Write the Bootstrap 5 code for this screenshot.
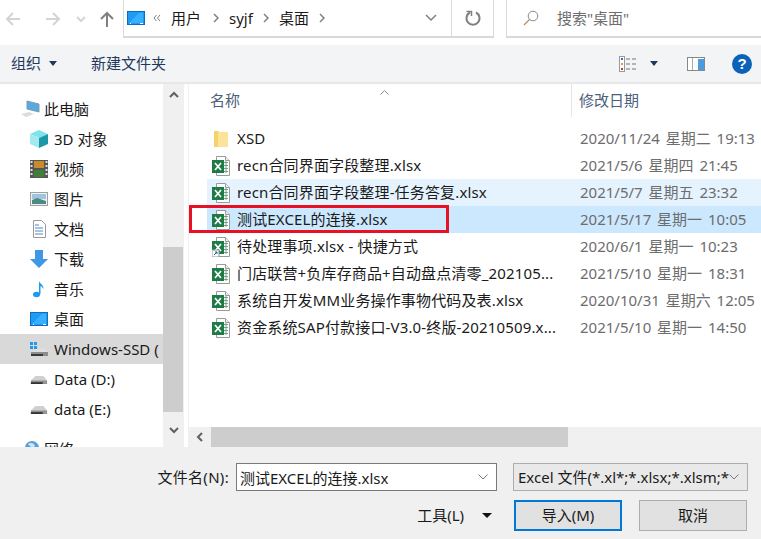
<!DOCTYPE html>
<html lang="zh-CN">
<head>
  <meta charset="UTF-8">
  <title>打开</title>
  <link href="https://cdn.jsdelivr.net/npm/bootstrap@5.3.3/dist/css/bootstrap.min.css" rel="stylesheet">
  <style>
    html, body { height: 539px; overflow: hidden; }
    body { font-family: "Noto Sans", "Noto Sans CJK SC", sans-serif; font-size: 15px; color: #1a1a1a; background: #fff; }
    .dlg { width: 761px; height: 539px; overflow: hidden; }
    svg { display: block; flex: none; }

    /* address row */
    .topbar { height: 45px; flex: none; }
    .nav-btns { width: 123px; padding: 11px 0 0 5px; height: 37px; }
    .addr { width: 371px; height: 38px; border: 2px solid #d9d9d9; border-width: 0 1px 2px 1px; }
    .addr-main { padding-left: 3px; height: 36px; }
    .crumb { font-size: 15px; white-space: nowrap; }
    .addr-drop { width: 24px; margin-left: auto; margin-right: 8px; }
    .addr-refresh { width: 42px; height: 36px; border-left: 1px solid #d9d9d9; }
    .search { margin-left: 12px; width: 255px; height: 38px; border-bottom: 2px solid #d9d9d9; border-left: 1px solid #d9d9d9; padding-left: 16px; color: #6d6d6d; }

    /* command row */
    .cmdbar { height: 39px; flex: none; background: #f3f4f6; border-bottom: 2px solid #e7e8ea; color: #1e395b; padding: 0 9px 0 11px; }
    .tri { width: 0; height: 0; border: 4px solid transparent; border-top: 5px solid #1e395b; border-bottom: 0; }
    .help { width: 20px; height: 20px; border-radius: 50%; background: #0b63b8; color: #fff; font: bold 15px/20px "Liberation Sans", sans-serif; text-align: center; }

    /* tree and list */
    .panes { height: 363px; flex: none; overflow: hidden; }
    .tree { width: 163px; flex: none; overflow: hidden; padding-top: 10px; }
    .tree-row { height: 30px; padding-left: 30px; gap: 6px; white-space: nowrap; overflow: hidden; }
    .tree-row.top { padding-left: 20px; gap: 4px; }
    .tree-row.cur { background: #d9d9d9; }
    .tree-row.net { margin-top: 10px; padding-left: 20px; gap: 4px; }
    .vscroll { width: 21px; flex: none; background: #f0f0f0; }
    .vscroll .arrow { height: 20px; }
    .vthumb { height: 165px; margin: 143px 1px 0 0; background: #cdcdcd; }
    .files { margin-left: 4px; flex: 1; min-width: 0; border-left: 1px solid #f0f0f0; overflow: hidden; }
    .head-row { height: 33px; color: #4c607a; }
    .head-name { width: 382px; padding-left: 21px; position: relative; }
    .sort-mark { position: absolute; left: 191px; top: 1px; }
    .head-date { padding-left: 7px; border-left: 1px solid #e5e5e5; height: 33px; }
    .file-list { padding-top: 8px; height: 310px; }
    .file-row { height: 27px; margin-left: 18px; padding-left: 5px; }
    .file-row.hov { background: #e5f3ff; }
    .file-row.sel { background: #cce8ff; }
    .f-name { width: 341px; margin-left: 7px; white-space: nowrap; overflow: hidden; letter-spacing: .15px; }
    .f-date { margin-left: 2px; color: #6d6d6d; white-space: nowrap; word-spacing: 2px; }
    .mark-box { position: absolute; left: -18px; top: -1px; width: 260px; height: 28px; border: 3px solid #e81123; }
    .hscroll { height: 20px; background: #f0f0f0; }
    .hthumb { width: 357px; height: 20px; margin-left: 2px; background: #cdcdcd; }

    /* bottom panel */
    .foot { flex: 1; background: #f0f0f0; padding: 16px 13px 0 0; }
    .name-row { height: 28px; gap: 7px; }
    .name-label { letter-spacing: .3px; }
    .name-box { width: 261px; height: 28px; background: #fff; border: 1px solid #7a7a7a; padding: 0 8px 0 3px; }
    .name-box input { border: 0; padding: 0; outline: 0; background: none; font-size: 15px; color: #1a1a1a; width: 230px; height: 26px; }
    .type-box { width: 235px; height: 28px; margin-left: 9px; background: #e9e9e9; border: 1px solid #adadad; padding: 0 8px 0 4px; white-space: nowrap; overflow: hidden; }
    .act-row { margin-top: 9px; margin-right: 1px; height: 31px; }
    .tri-black { width: 0; height: 0; border: 5px solid transparent; border-top: 5px solid #111; border-bottom: 0; margin: 0 22px 0 18px; }
    .win-btn { width: 108px; height: 31px; padding: 0; background: #e1e1e1; border: 1px solid #adadad; border-radius: 0; font-size: 15px; color: #1a1a1a; }
    .win-btn.main-act { border: 2px solid #0078d7; margin-right: 17px; }
  </style>
</head>
<body>
  <svg width="0" height="0" class="position-absolute">
    <symbol id="xl" viewBox="0 0 18 20">
      <path d="M4.500.5h9l4 4v15h-13z" fill="#fff" stroke="#9a9a9a"/>
      <path d="M13.500.5v4h4" fill="#eee" stroke="#9a9a9a"/>
      <path d="M12 6.500h4M12 9.500h4M12 12.500h4M12 15.500h4M14 5v12" stroke="#6fa786" fill="none"/>
      <rect y="4" width="12" height="13" fill="#1e7b45"/>
      <path d="M3 7l6 7M9 7l-6 7" stroke="#fff" stroke-width="1.700" fill="none"/>
    </symbol>
    <symbol id="drive" viewBox="0 0 20 14">
      <path d="M1 8l5-5h9l4 5z" fill="#d0d0d0"/>
      <path d="M1 8h18v4H1z" fill="#8d8d8d"/>
      <path d="M1 10h13v2H1z" fill="#333"/>
      <path d="M16 10h2v1h-2z" fill="#7ed957"/>
    </symbol>
    <symbol id="desk" viewBox="0 0 18 14">
      <rect x=".5" y=".5" width="17" height="13" fill="#1f9bf2" stroke="#0a6fc0"/>
      <path d="M2 12L12 2h4v10z" fill="#36b0ff"/>
      <path d="M3 12.500h1M13 12.500h3" stroke="#fff"/>
    </symbol>
  </svg>

  <div class="dlg d-flex flex-column">
    <div class="topbar d-flex">
      <div class="nav-btns d-flex align-items-start">
        <svg width="16" height="16" viewBox="0 0 16 16"><path d="M15 8H2M8 2L2 8l6 6" fill="none" stroke="#d4d4d4" stroke-width="2"/></svg>
        <svg class="ms-4" width="16" height="16" viewBox="0 0 16 16"><path d="M1 8h13M8 2l6 6-6 6" fill="none" stroke="#d4d4d4" stroke-width="2"/></svg>
        <svg class="mt-1" style="margin-left:15px" width="10" height="8" viewBox="0 0 10 8"><path d="M1 2l4 4 4-4" fill="none" stroke="#d4d4d4" stroke-width="2"/></svg>
        <svg style="margin-left:14px" width="14" height="16" viewBox="0 0 14 16"><path d="M7 16V2M1 8l6-6 6 6" fill="none" stroke="#808080" stroke-width="2"/></svg>
      </div>
      <div class="addr d-flex">
        <div class="addr-main d-flex align-items-center flex-grow-1">
          <svg width="18" height="14"><use href="#desk"/></svg>
          <svg style="margin-left:8px" width="8" height="8" viewBox="0 0 8 8"><path d="M3.500 1L1 4l2.500 3M7 1L4.500 4 7 7" fill="none" stroke="#808080"/></svg>
          <span class="crumb" style="margin-left:10px">用户</span>
          <svg style="margin-left:12px" width="6" height="10" viewBox="0 0 6 10"><path d="M1 1l4 4-4 4" fill="none" stroke="#808080" stroke-width="1.500"/></svg>
          <span class="crumb" style="margin-left:10px">syjf</span>
          <svg style="margin-left:10px" width="6" height="10" viewBox="0 0 6 10"><path d="M1 1l4 4-4 4" fill="none" stroke="#808080" stroke-width="1.500"/></svg>
          <span class="crumb" style="margin-left:10px">桌面</span>
          <svg style="margin-left:10px" width="6" height="10" viewBox="0 0 6 10"><path d="M1 1l4 4-4 4" fill="none" stroke="#808080" stroke-width="1.500"/></svg>
          <div class="addr-drop d-flex justify-content-center">
            <svg width="12" height="8" viewBox="0 0 12 8"><path d="M1 1l5 5 5-5" fill="none" stroke="#808080" stroke-width="1.500"/></svg>
          </div>
        </div>
        <div class="addr-refresh d-flex align-items-center justify-content-center">
          <svg width="16" height="16" viewBox="0 0 16 16"><path d="M5 2.500a6.500 6.500 0 1 0 6 0" fill="none" stroke="#808080" stroke-width="2"/><path d="M1.500 1.500H6.500V6" fill="none" stroke="#808080" stroke-width="1.500"/></svg>
        </div>
      </div>
      <div class="search d-flex align-items-center">
        <svg width="16" height="16" viewBox="0 0 16 16"><circle cx="10" cy="6" r="4.800" fill="none" stroke="#8a8a8a"/><path d="M6.500 9.500L1 15" stroke="#c08a5a" stroke-width="1.200"/></svg>
        <span style="margin-left:18px">搜索"桌面"</span>
      </div>
    </div>

    <div class="cmdbar d-flex align-items-center">
      <span>组织</span>
      <span class="tri ms-2"></span>
      <span style="margin-left:34px">新建文件夹</span>
      <svg class="ms-auto" width="18" height="16" viewBox="0 0 18 16">
        <rect x=".5" y=".5" width="5" height="15" fill="#fff" stroke="#999"/>
        <path d="M2 3h2" stroke="#3a6ea5" stroke-width="2"/><path d="M2 8h2" stroke="#c9a227" stroke-width="2"/><path d="M2 13h2" stroke="#c0392b" stroke-width="2"/>
        <path d="M7 3h4M13 3h4M7 8h4M13 8h4M7 13h4M13 13h4" stroke="#777"/>
      </svg>
      <span class="tri" style="margin-left:13px"></span>
      <svg style="margin-left:29px" width="18" height="14" viewBox="0 0 18 14">
        <rect x=".5" y=".5" width="17" height="13" fill="#fff" stroke="#888"/>
        <rect x="11" y="2" width="6" height="11" fill="#4a9be0"/>
        <path d="M5.500 1v12" stroke="#aaa"/>
      </svg>
      <span class="help" style="margin-left:27px">?</span>
    </div>

    <div class="panes d-flex">
      <div class="tree">
        <div class="tree-row top d-flex align-items-center">
          <svg width="20" height="18" viewBox="0 0 20 18"><path d="M7 1l12 3v8L7 9z" fill="#5aa9de" stroke="#7d9cb3"/><path d="M1 14l8-2 5 2-8 3z" fill="#dcdcdc"/></svg>
          <span>此电脑</span>
        </div>
        <div class="tree-row d-flex align-items-center">
          <svg width="18" height="18" viewBox="0 0 18 18"><path d="M9 0l9 4-9 4-9-4z" fill="#7fe3ea"/><path d="M0 4l9 4v10l-9-4z" fill="#a5e8ee"/><path d="M18 4L9 8v10l9-4z" fill="#1c97a8"/></svg>
          <span>3D 对象</span>
        </div>
        <div class="tree-row d-flex align-items-center">
          <svg width="18" height="18" viewBox="0 0 18 18"><rect width="18" height="18" fill="#555"/><rect x="4" y="1" width="10" height="7" fill="#c98b2c"/><rect x="4" y="10" width="10" height="7" fill="#3f7f3a"/><path d="M1.500 1v16M16.500 1v16" stroke="#ddd" stroke-dasharray="2 2" stroke-width="2"/></svg>
          <span>视频</span>
        </div>
        <div class="tree-row d-flex align-items-center">
          <svg width="18" height="14" viewBox="0 0 18 14"><rect x=".5" y=".5" width="17" height="13" fill="#eaf3f8" stroke="#a0a0a0"/><rect x="2" y="2" width="14" height="5" fill="#9fc5dc"/><path d="M2 8l5-2 9 3v3H2z" fill="#4c8a82"/></svg>
          <span>图片</span>
        </div>
        <div class="tree-row d-flex align-items-center">
          <svg width="18" height="18" viewBox="0 0 18 18"><path d="M3.500.5h8l4 4v13h-12z" fill="#fff" stroke="#999"/><path d="M5 5h4M5 8h8M5 11h8M5 14h8" stroke="#4a86c5"/></svg>
          <span>文档</span>
        </div>
        <div class="tree-row d-flex align-items-center">
          <svg width="18" height="18" viewBox="0 0 18 18"><path d="M5 0h8v9h5l-9 9-9-9h5z" fill="#3f97e5"/></svg>
          <span>下载</span>
        </div>
        <div class="tree-row d-flex align-items-center">
          <svg width="18" height="18" viewBox="0 0 18 18"><ellipse cx="6.500" cy="14.500" rx="3.500" ry="2.800" fill="#1b9bf0"/><path d="M9 14V1c1 3 5 4 4.500 8-1-2-2.500-3-3-3v8z" fill="#1b9bf0"/></svg>
          <span>音乐</span>
        </div>
        <div class="tree-row d-flex align-items-center">
          <svg width="18" height="14"><use href="#desk"/></svg>
          <span>桌面</span>
        </div>
        <div class="tree-row cur d-flex align-items-center">
          <svg width="18" height="16" viewBox="0 0 18 16"><path d="M0 1h3v3H0zM4 1h3v3H4zM0 5h3v3H0zM4 5h3v3H4z" fill="#1e9bf0"/><path d="M1 11l5-3h8l4 3z" fill="#e0e0e0"/><path d="M1 11h17v4H1z" fill="#8d8d8d"/><path d="M1 13h12v2H1z" fill="#3a3a3a"/></svg>
          <span>Windows-SSD (</span>
        </div>
        <div class="tree-row d-flex align-items-center">
          <svg width="18" height="13"><use href="#drive"/></svg>
          <span>Data (D:)</span>
        </div>
        <div class="tree-row d-flex align-items-center">
          <svg width="18" height="13"><use href="#drive"/></svg>
          <span>data (E:)</span>
        </div>
        <div class="tree-row net d-flex align-items-center">
          <svg width="20" height="18" viewBox="0 0 20 18"><circle cx="12" cy="8" r="7" fill="#5aa0d8"/><path d="M8 4c3-2 6-1 7 2-2 2-5 1-7-2z" fill="#cde6f7"/><path d="M0 12h8v3H0z" fill="#4a8fd0"/></svg>
          <span>网络</span>
        </div>
      </div>

      <div class="vscroll">
        <div class="arrow d-flex align-items-center justify-content-center">
          <svg width="10" height="7" viewBox="0 0 10 7"><path d="M1 6l4-4 4 4" fill="none" stroke="#606060" stroke-width="2"/></svg>
        </div>
        <div class="vthumb"></div>
        <div class="arrow d-flex align-items-center justify-content-center" style="margin-top:8px">
          <svg width="10" height="7" viewBox="0 0 10 7"><path d="M1 1l4 4 4-4" fill="none" stroke="#606060" stroke-width="2"/></svg>
        </div>
      </div>

      <div class="files d-flex flex-column">
        <div class="head-row d-flex align-items-center">
          <div class="head-name">名称
            <svg class="sort-mark" width="9" height="5" viewBox="0 0 9 5"><path d="M.5 4.500l4-4 4 4" fill="none" stroke="#8a8a8a"/></svg>
          </div>
          <div class="head-date d-flex align-items-center">修改日期</div>
        </div>
        <div class="file-list">
          <div class="file-row d-flex align-items-center">
            <svg width="18" height="18" viewBox="0 0 18 18"><path d="M2 1h5v16H2z" fill="#f6d26b"/><path d="M6 2h10v15H6z" fill="#fbe39b"/></svg>
            <span class="f-name">XSD</span><span class="f-date">2020/11/24 星期二 19:13</span>
          </div>
          <div class="file-row d-flex align-items-center">
            <svg width="18" height="20"><use href="#xl"/></svg>
            <span class="f-name">recn合同界面字段整理.xlsx</span><span class="f-date">2021/5/6 星期四 21:45</span>
          </div>
          <div class="file-row hov d-flex align-items-center">
            <svg width="18" height="20"><use href="#xl"/></svg>
            <span class="f-name">recn合同界面字段整理-任务答复.xlsx</span><span class="f-date">2021/5/7 星期五 23:32</span>
          </div>
          <div class="file-row sel d-flex align-items-center position-relative">
            <svg width="18" height="20"><use href="#xl"/></svg>
            <span class="f-name">测试EXCEL的连接.xlsx</span><span class="f-date">2021/5/17 星期一 10:05</span>
            <span class="mark-box"></span>
          </div>
          <div class="file-row d-flex align-items-center">
            <svg width="18" height="20" viewBox="0 0 18 20"><use href="#xl"/><rect x="0" y="13" width="7" height="7" fill="#fff" stroke="#999"/><path d="M2 18l3-3M3 15h2v2" stroke="#1b5fb0" fill="none"/></svg>
            <span class="f-name">待处理事项.xlsx - 快捷方式</span><span class="f-date">2020/6/1 星期一 10:23</span>
          </div>
          <div class="file-row d-flex align-items-center">
            <svg width="18" height="20"><use href="#xl"/></svg>
            <span class="f-name">门店联营+负库存商品+自动盘点清零_202105...</span><span class="f-date">2021/5/10 星期一 18:31</span>
          </div>
          <div class="file-row d-flex align-items-center">
            <svg width="18" height="20"><use href="#xl"/></svg>
            <span class="f-name">系统自开发MM业务操作事物代码及表.xlsx</span><span class="f-date">2020/10/31 星期六 12:05</span>
          </div>
          <div class="file-row d-flex align-items-center">
            <svg width="18" height="20"><use href="#xl"/></svg>
            <span class="f-name">资金系统SAP付款接口-V3.0-终版-20210509.x...</span><span class="f-date">2021/5/10 星期一 14:50</span>
          </div>
        </div>
        <div class="hscroll d-flex align-items-center">
          <div class="d-flex justify-content-center" style="width:20px">
            <svg width="7" height="10" viewBox="0 0 7 10"><path d="M6 1L2 5l4 4" fill="none" stroke="#606060" stroke-width="2"/></svg>
          </div>
          <div class="hthumb"></div>
        </div>
      </div>
    </div>

    <div class="foot">
      <div class="name-row d-flex align-items-center justify-content-end">
        <span class="name-label">文件名(N):</span>
        <div class="name-box d-flex align-items-center justify-content-between">
          <input type="text" value="测试EXCEL的连接.xlsx">
          <svg width="10" height="6" viewBox="0 0 10 6"><path d="M.5.500L5 5 9.500.5" fill="none" stroke="#777"/></svg>
        </div>
        <div class="type-box d-flex align-items-center justify-content-between">
          <span>Excel 文件(*.xl*;*.xlsx;*.xlsm;*</span>
          <svg width="10" height="6" viewBox="0 0 10 6"><path d="M.5.500L5 5 9.500.5" fill="none" stroke="#777"/></svg>
        </div>
      </div>
      <div class="act-row d-flex align-items-center justify-content-end">
        <span>工具(L)</span>
        <span class="tri-black"></span>
        <button type="button" class="btn win-btn main-act">导入(M)</button>
        <button type="button" class="btn win-btn">取消</button>
      </div>
    </div>
  </div>
</body>
</html>
